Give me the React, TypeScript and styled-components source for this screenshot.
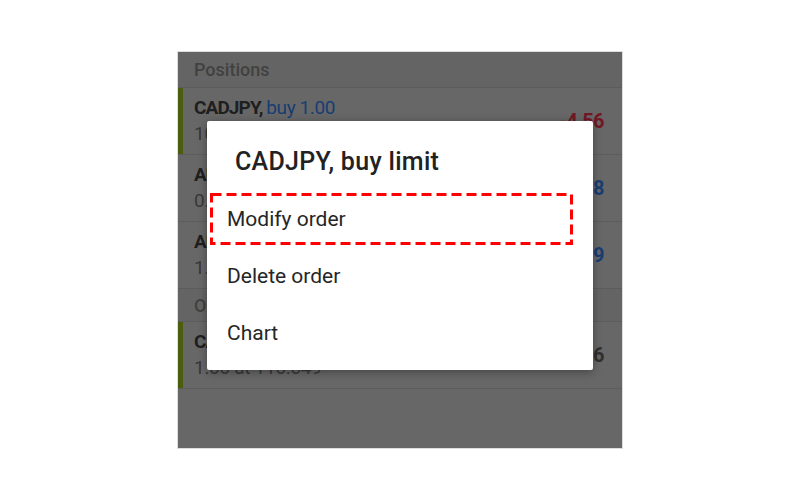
import React from "react";
import styled, { createGlobalStyle } from "styled-components";

const GlobalStyle = createGlobalStyle`
  html, body {
    margin: 0;
    padding: 0;
    background: #ffffff;
    font-family: Roboto, "Noto Sans", "Liberation Sans", sans-serif;
  }
`;

const Page = styled.div`
  width: 800px;
  height: 500px;
  display: flex;
  align-items: center;
  justify-content: center;
`;

const Phone = styled.div`
  position: relative;
  box-sizing: border-box;
  width: 446px;
  height: 398px;
  border: 1px solid #dedede;
  background: #8a8a8a;
  overflow: hidden;
`;

const SectionHeader = styled.div<{ $height: number }>`
  box-sizing: border-box;
  height: ${({ $height }) => $height}px;
  display: flex;
  align-items: center;
  padding-left: 16px;
  background: #868686;
  border-bottom: 1px solid #7b7b7b;
  color: #575757;
  font-size: 18px;
  font-weight: 500;
`;

const Row = styled.div<{ $accent?: boolean }>`
  box-sizing: border-box;
  height: 67px;
  display: flex;
  align-items: center;
  justify-content: space-between;
  padding: 0 18px 0 16px;
  border-bottom: 1px solid #7b7b7b;
  box-shadow: ${({ $accent }) => ($accent ? "inset 5px 0 0 #647d15" : "none")};
`;

const RowText = styled.div`
  display: flex;
  flex-direction: column;
  gap: 3px;
  margin-top: -1px;
`;

const Symbol = styled.div`
  font-size: 19px;
  line-height: 23px;
  font-weight: 700;
  letter-spacing: -0.9px;
  color: #2a2a2a;
`;

const Side = styled.span`
  font-weight: 400;
  letter-spacing: -0.4px;
  color: #1f5299;
`;

const Detail = styled.div`
  font-size: 19px;
  line-height: 23px;
  letter-spacing: -0.3px;
  color: #4c4c4c;
`;

const Value = styled.div<{ $tone: "loss" | "profit" | "plain" }>`
  font-size: 20px;
  font-weight: 700;
  letter-spacing: -0.6px;
  color: ${({ $tone }) =>
    $tone === "loss" ? "#982030" : $tone === "profit" ? "#1f5299" : "#404040"};
`;

const Overlay = styled.div`
  position: absolute;
  inset: 0;
  background: rgba(0, 0, 0, 0.25);
  display: flex;
  justify-content: center;
  align-items: flex-start;
  padding-top: 69px;
`;

const Dialog = styled.div`
  width: 386px;
  background: #ffffff;
  border-radius: 2px;
  box-shadow: 0 2px 8px rgba(0, 0, 0, 0.35);
  padding-bottom: 9px;
`;

const DialogTitle = styled.div`
  height: 69px;
  box-sizing: border-box;
  padding: 24px 0 0 28px;
  font-size: 25px;
  line-height: 34px;
  font-weight: 500;
  letter-spacing: 0.3px;
  color: #222222;
`;

const MenuItem = styled.div`
  position: relative;
  height: 57px;
  display: flex;
  align-items: center;
  padding-left: 20px;
  font-size: 21px;
  color: #262626;
`;

const Highlight = styled.svg`
  position: absolute;
  left: 3px;
  top: 3px;
`;

type Position = {
  symbol: string;
  side: string;
  detail: string;
  value: string;
  tone: "loss" | "profit" | "plain";
  accent?: boolean;
};

const POSITIONS: Position[] = [
  { symbol: "CADJPY,", side: "buy 1.00", detail: "109.567 → 109.521", value: "-4.56", tone: "loss", accent: true },
  { symbol: "AUDUSD,", side: "buy 0.10", detail: "0.75241 → 0.75259", value: "1.78", tone: "profit" },
  { symbol: "AUDNZD,", side: "sell 0.10", detail: "1.07432 → 1.07401", value: "2.09", tone: "profit" },
];

const ORDERS: Position[] = [
  { symbol: "CADJPY,", side: "buy limit 1.00", detail: "1.00 at 110.049", value: "109.526", tone: "plain", accent: true },
];

const ITEMS = ["Modify order", "Delete order", "Chart"];

const ListRow = ({ p }: { p: Position }) => (
  <Row $accent={p.accent}>
    <RowText>
      <Symbol>
        {p.symbol} <Side>{p.side}</Side>
      </Symbol>
      <Detail>{p.detail}</Detail>
    </RowText>
    <Value $tone={p.tone}>{p.value}</Value>
  </Row>
);

export default function App() {
  return (
    <Page>
      <GlobalStyle />
      <Phone>
        <SectionHeader $height={36}>Positions</SectionHeader>
        {POSITIONS.map((p) => (
          <ListRow key={p.symbol + p.side} p={p} />
        ))}
        <SectionHeader $height={33}>Orders</SectionHeader>
        {ORDERS.map((p) => (
          <ListRow key={p.symbol + p.side} p={p} />
        ))}

        <Overlay>
          <Dialog>
            <DialogTitle>CADJPY, buy limit</DialogTitle>
            {ITEMS.map((item, i) => (
              <MenuItem key={item}>
                {item}
                {i === 0 && (
                  <Highlight width="363" height="52" viewBox="0 0 363 52">
                    <rect
                      x="1.5"
                      y="1.5"
                      width="360"
                      height="49"
                      fill="none"
                      stroke="#ff0000"
                      strokeWidth="3"
                      strokeDasharray="10 5"
                    />
                  </Highlight>
                )}
              </MenuItem>
            ))}
          </Dialog>
        </Overlay>
      </Phone>
    </Page>
  );
}
